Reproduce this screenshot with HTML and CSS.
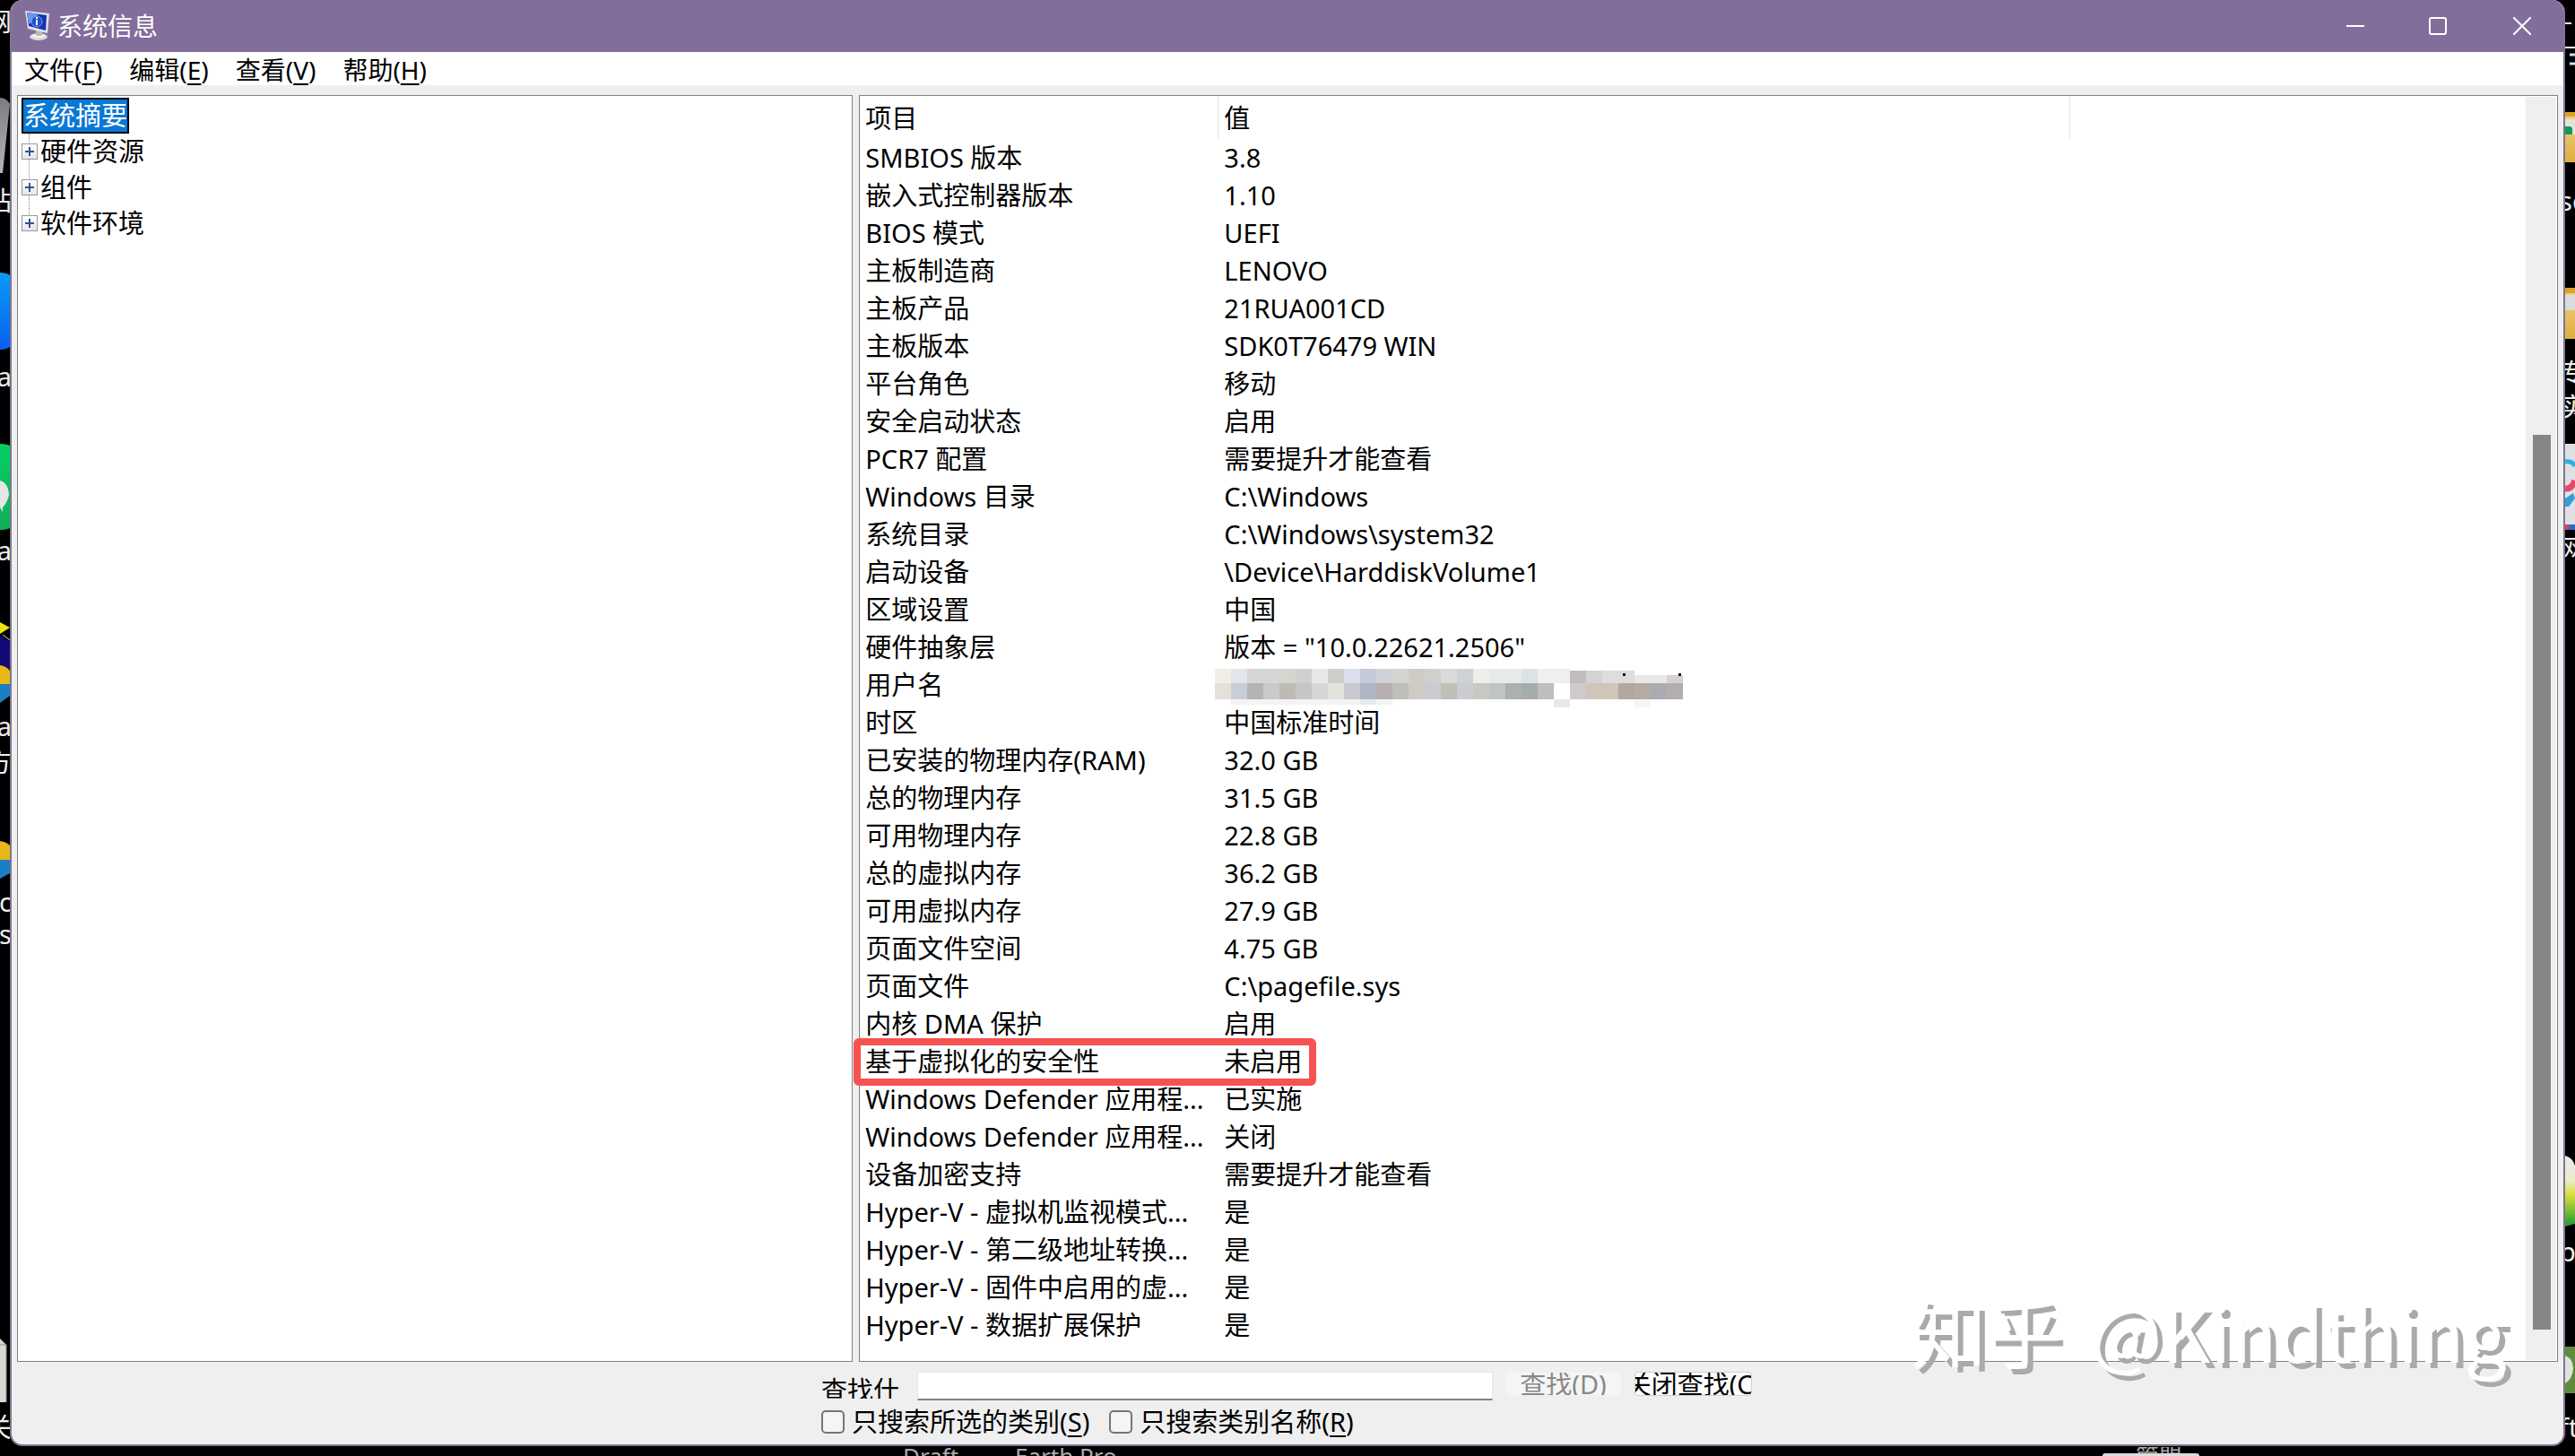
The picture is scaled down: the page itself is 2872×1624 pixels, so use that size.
FILE: index.html
```html
<!DOCTYPE html>
<html lang="zh-CN">
<head>
<meta charset="utf-8">
<title>系统信息</title>
<link rel="stylesheet" href="styles.css">
</head>
<body>
<div class="desktop">
  <div class="edge edge-left" aria-hidden="true">
    <svg width="11" height="1624" viewBox="0 0 11 1624">
      <defs>
        <linearGradient id="blue" x1="0" y1="0" x2="0" y2="1"><stop offset="0" stop-color="#0a9bf5"/><stop offset="1" stop-color="#0a5ff0"/></linearGradient>
        <linearGradient id="green" x1="0" y1="0" x2="0" y2="1"><stop offset="0" stop-color="#06cf62"/><stop offset="1" stop-color="#10ad58"/></linearGradient>
        <linearGradient id="bin" x1="0" y1="0" x2="0" y2="1"><stop offset="0" stop-color="#7c7c7c"/><stop offset="1" stop-color="#b5b5b5"/></linearGradient>
      </defs>
      <path d="M0 109Q7 109 11 116L3 193H0z" fill="url(#bin)"/>
      <path d="M0 304Q7 304 11 307V387Q7 390 0 390z" fill="url(#blue)"/>
      <path d="M0 495Q7 495 11 497V589Q7 591 0 591z" fill="url(#green)"/>
      <path d="M0 536Q9 538 10 552Q8 561 3 566V571L0 566z" fill="#e6e6e6"/>
      <path d="M0 694L11 700L0 707z" fill="#e9e312"/>
      <path d="M0 709L11 716V746L0 744z" fill="#130a78"/>
      <path d="M3 708L11 714" stroke="#ddd"/>
      <path d="M0 742Q7 743 11 748V763H0z" fill="#e7b818"/>
      <path d="M0 763H11V776L0 784z" fill="#1c7fc4"/>
      <path d="M0 938Q7 939 11 943V959H0z" fill="#e7b818"/>
      <path d="M0 959H11V974L0 980z" fill="#1c7fc4"/>
      <path d="M0 1493L7 1500V1564H0z" fill="#d6d8d6"/>
      <path d="M0 1500H7V1564" fill="none" stroke="#8a8d86"/>
    </svg>
    <span class="frag" style="top:4px">网</span>
    <span class="frag" style="top:204px">站</span>
    <span class="frag" style="top:400px">a</span>
    <span class="frag" style="top:594px">a</span>
    <span class="frag" style="top:790px">ra</span>
    <span class="frag" style="top:830px">方</span>
    <span class="frag" style="top:986px">yc</span>
    <span class="frag" style="top:1022px">s</span>
    <span class="frag" style="top:1572px">关</span>
  </div>
  <div class="edge edge-right" aria-hidden="true">
    <svg width="11" height="1624" viewBox="0 0 11 1624">
      <defs>
        <linearGradient id="folder" x1="0" y1="0" x2="0" y2="1"><stop offset="0" stop-color="#f0d68a"/><stop offset="1" stop-color="#dfae3e"/></linearGradient>
        <linearGradient id="ball" x1="0" y1="0" x2="0" y2="1"><stop offset="0" stop-color="#ececec"/><stop offset=".35" stop-color="#e8ecc8"/><stop offset=".55" stop-color="#d8e038"/><stop offset="1" stop-color="#1f9a35"/></linearGradient>
      </defs>
      <path d="M0 26H7M0 53H11" stroke="#eee" stroke-width="2"/>
      <path d="M5 61H11M5 71H11" stroke="#bfe4f5" stroke-width="3"/>
      <path d="M0 125H11V181H0z" fill="url(#folder)"/><path d="M0 125H11V130H0z" fill="#d9a32c"/>
      <path d="M0 133H11V150H0z" fill="#e4e4d8"/><path d="M0 141H6L8 143V150H0z" fill="#0d9c5e"/>
      <path d="M0 321H11V378H0z" fill="url(#folder)"/><path d="M0 321H11V327H0z" fill="#d9a32c"/>
      <path d="M0 329H11V346H0z" fill="#dcdcdc"/>
      <path d="M0 495H11V585H0z" fill="#dfe0e4"/>
      <path d="M0 515Q8 514 11 520" fill="none" stroke="#28b4e4" stroke-width="5"/>
      <path d="M0 545Q7 546 11 536" fill="none" stroke="#e8486a" stroke-width="7"/>
      <path d="M0 556L9 550L11 556L4 565H0z" fill="#2f9fd8"/>
      <path d="M0 585H4V591H0z" fill="#e23c5c"/><path d="M4 585H11V591H4z" fill="#2a6cc0"/>
      <path d="M0 1289Q8 1291 11 1300V1365L0 1368z" fill="url(#ball)"/>
      <path d="M0 1502H11V1554H0z" fill="#5f8c3c"/>
      <path d="M0 1512Q9 1515 9 1527Q8 1538 0 1543z" fill="#dde4dc"/>
    </svg>
    <span class="frag" style="top:204px">sc</span>
    <span class="frag" style="top:396px">专</span>
    <span class="frag" style="top:434px">实</span>
    <span class="frag" style="top:592px">网</span>
    <span class="frag" style="top:1376px">p</span>
    <span class="frag" style="top:1572px">ft</span>
  </div>
  <div class="edge edge-bottom" aria-hidden="true">
    <span class="under" style="left:1007px">Draft</span>
    <span class="under" style="left:1132px">Earth Pro</span>
    <span class="under" style="left:2382px">管盟</span>
    <span class="tip"></span>
  </div>

  <div class="window">
    <header class="titlebar">
      <svg class="app-icon" width="30" height="34" viewBox="0 0 30 34" aria-hidden="true">
        <ellipse cx="16" cy="29" rx="10" ry="4" fill="#d9d9d6"/>
        <ellipse cx="16" cy="28" rx="7" ry="2" fill="#f5f5f3"/>
        <path d="M13 22h7v6h-7z" fill="#b9b9b5"/>
        <path d="M1 0L28 3L26 25L4 20z" fill="#dfe2ea"/>
        <path d="M3 2L25 5L24 22L5 17z" fill="#1532b4"/>
        <path d="M3 2L15 4Q12 12 5 15z" fill="#6f94e8"/>
        <circle cx="14" cy="12" r="6" fill="#2450c4" stroke="#7fa2ee"/>
        <path d="M14 10v6M14 7v2" stroke="#fff" stroke-width="2"/>
      </svg>
      <h1 class="title">系统信息</h1>
      <div class="controls">
        <button type="button" aria-label="最小化"><svg width="20" height="20" viewBox="0 0 20 20"><path d="M0 10H20"/></svg></button>
        <button type="button" aria-label="最大化"><svg width="20" height="20" viewBox="0 0 20 20"><rect x="1" y="1" width="18" height="18" rx="2"/></svg></button>
        <button type="button" aria-label="关闭"><svg width="20" height="20" viewBox="0 0 20 20"><path d="M0 0L20 20M20 0L0 20"/></svg></button>
      </div>
    </header>

    <nav class="menu">
      <button type="button">文件(<u>F</u>)</button>
      <button type="button">编辑(<u>E</u>)</button>
      <button type="button">查看(<u>V</u>)</button>
      <button type="button">帮助(<u>H</u>)</button>
    </nav>

    <main class="panes">
      <section class="pane tree">
        <span class="root">系统摘要</span>
        <ul class="branches">
          <li><button type="button" class="expander" aria-label="展开"></button>硬件资源</li>
          <li><button type="button" class="expander" aria-label="展开"></button>组件</li>
          <li><button type="button" class="expander" aria-label="展开"></button>软件环境</li>
        </ul>
      </section>

      <section class="pane details">
        <table>
          <colgroup><col class="col-item"><col class="col-value"><col></colgroup>
          <thead><tr><th>项目</th><th>值</th><th></th></tr></thead>
          <tbody>
            <tr><td>SMBIOS 版本</td><td>3.8</td></tr>
            <tr><td>嵌入式控制器版本</td><td>1.10</td></tr>
            <tr><td>BIOS 模式</td><td>UEFI</td></tr>
            <tr><td>主板制造商</td><td>LENOVO</td></tr>
            <tr><td>主板产品</td><td>21RUA001CD</td></tr>
            <tr><td>主板版本</td><td>SDK0T76479 WIN</td></tr>
            <tr><td>平台角色</td><td>移动</td></tr>
            <tr><td>安全启动状态</td><td>启用</td></tr>
            <tr><td>PCR7 配置</td><td>需要提升才能查看</td></tr>
            <tr><td>Windows 目录</td><td>C:\Windows</td></tr>
            <tr><td>系统目录</td><td>C:\Windows\system32</td></tr>
            <tr><td>启动设备</td><td>\Device\HarddiskVolume1</td></tr>
            <tr><td>区域设置</td><td>中国</td></tr>
            <tr><td>硬件抽象层</td><td>版本 = "10.0.22621.2506"</td></tr>
            <tr><td>用户名</td><td class="masked"><svg class="mosaic" width="522" height="44" viewBox="0 0 522 44" shape-rendering="crispEdges" aria-hidden="true">
              <g stroke-width="16">
                <path d="M0 9h18" stroke="#f0eee6"/><path d="M18 9h18" stroke="#e2e6ec"/><path d="M36 9h36" stroke="#d6d6d6"/><path d="M72 9h18" stroke="#d6d6d0"/><path d="M90 9h18" stroke="#d0d0d0"/><path d="M108 9h18" stroke="#e8e8e8"/><path d="M126 9h18" stroke="#cfcfca"/><path d="M144 9h18" stroke="#dce0ec"/><path d="M162 9h18" stroke="#c4cad6"/><path d="M180 9h18" stroke="#d0d2d8"/><path d="M198 9h18" stroke="#d5d5d0"/><path d="M216 9h18" stroke="#ceccc5"/><path d="M234 9h18" stroke="#d0d0cc"/><path d="M252 9h18" stroke="#dadada"/><path d="M270 9h18" stroke="#ced1d6"/><path d="M288 9h18" stroke="#eeede7"/><path d="M306 9h36" stroke="#e8eaea"/><path d="M342 9h18" stroke="#dce2e8"/><path d="M360 9h36" stroke="#efefef"/><path d="M396 11h18" stroke="#bfbdbf"/><path d="M414 11h18" stroke="#d4d2d4"/><path d="M432 11h36" stroke="#dedcdc"/>
              </g>
              <path d="M468 13h36" stroke="#e8e8ea" stroke-width="10"/><path d="M504 13h18" stroke="#d8d0d0" stroke-width="10"/>
              <g stroke-width="18">
                <path d="M0 26h18" stroke="#e5e1d8"/><path d="M18 26h18" stroke="#c8ced8"/><path d="M36 26h18" stroke="#b4b4b4"/><path d="M54 26h18" stroke="#c9cbca"/><path d="M72 26h18" stroke="#bdbbb4"/><path d="M90 26h18" stroke="#c6c6c6"/><path d="M108 26h18" stroke="#d6d6d6"/><path d="M126 26h18" stroke="#e2e3db"/><path d="M144 26h18" stroke="#cac9d1"/><path d="M162 26h18" stroke="#b0b6c6"/><path d="M180 26h18" stroke="#b7afb0"/><path d="M198 26h18" stroke="#bebebb"/><path d="M216 26h18" stroke="#cdcbc4"/><path d="M234 26h18" stroke="#cacbd0"/><path d="M252 26h18" stroke="#c0bfb7"/><path d="M270 26h18" stroke="#cacccf"/><path d="M288 26h18" stroke="#c8c9c5"/><path d="M306 26h18" stroke="#c0c4c4"/><path d="M324 26h18" stroke="#adb0b0"/><path d="M342 26h18" stroke="#a4adab"/><path d="M360 26h18" stroke="#bebebe"/><path d="M396 26h18" stroke="#cdc9cc"/><path d="M414 26h36" stroke="#cdc6b9"/><path d="M450 26h18" stroke="#b1a7a3"/><path d="M468 26h18" stroke="#b6aaa3"/><path d="M486 26h18" stroke="#aaaab0"/><path d="M504 26h18" stroke="#b3adb0"/>
              </g>
              <path d="M18 38h144M180 38h18" stroke="#f4f4f4" stroke-width="6"/><path d="M162 38h18" stroke="#e9eaee" stroke-width="6"/><path d="M378 40h18" stroke="#e8e8e8" stroke-width="10"/><path d="M468 41h18" stroke="#f6f6f6" stroke-width="12"/>
              <path d="M455 7h3M517 7h3" stroke="#111" stroke-width="3"/>
            </svg></td></tr>
            <tr><td>时区</td><td>中国标准时间</td></tr>
            <tr><td>已安装的物理内存(RAM)</td><td>32.0 GB</td></tr>
            <tr><td>总的物理内存</td><td>31.5 GB</td></tr>
            <tr><td>可用物理内存</td><td>22.8 GB</td></tr>
            <tr><td>总的虚拟内存</td><td>36.2 GB</td></tr>
            <tr><td>可用虚拟内存</td><td>27.9 GB</td></tr>
            <tr><td>页面文件空间</td><td>4.75 GB</td></tr>
            <tr><td>页面文件</td><td>C:\pagefile.sys</td></tr>
            <tr><td>内核 DMA 保护</td><td>启用</td></tr>
            <tr><td class="marked">基于虚拟化的安全性<span class="marker"></span></td><td>未启用</td></tr>
            <tr><td>Windows Defender 应用程...</td><td>已实施</td></tr>
            <tr><td>Windows Defender 应用程...</td><td>关闭</td></tr>
            <tr><td>设备加密支持</td><td>需要提升才能查看</td></tr>
            <tr><td>Hyper-V - 虚拟机监视模式...</td><td>是</td></tr>
            <tr><td>Hyper-V - 第二级地址转换...</td><td>是</td></tr>
            <tr><td>Hyper-V - 固件中启用的虚...</td><td>是</td></tr>
            <tr><td>Hyper-V - 数据扩展保护</td><td>是</td></tr>
          </tbody>
        </table>
        <div class="scrollbar"><div class="thumb"></div></div>
      </section>
    </main>

    <form class="find">
      <div class="find-row">
        <label class="find-label" for="query">查找什</label>
        <input class="query" id="query" type="text">
        <button type="button" class="push" disabled><span>查找(D)</span></button>
        <button type="button" class="push push-close"><span>关闭查找(C)</span></button>
      </div>
      <div class="check-row">
        <label><input type="checkbox"><span>只搜索所选的类别(<u>S</u>)</span></label>
        <label><input type="checkbox"><span>只搜索类别名称(<u>R</u>)</span></label>
      </div>
    </form>
  </div>
  <div class="watermark"><span>知乎</span><span>@Kindthing</span></div>
</div>
</body>
</html>
```
FILE: styles.css
```css
* { box-sizing: border-box; }

body {
  margin: 0;
  background: #000;
  color: #000;
  font: 29px/42px "Noto Sans", "Noto Sans CJK SC", sans-serif;
}

button, input { font: inherit; color: inherit; }

u { text-underline-offset: 4px; text-decoration-thickness: 2px; text-decoration-skip-ink: none; }

.desktop {
  position: relative;
  display: flex;
  min-height: 100vh;
  padding: 0 11px 11px;
  overflow: hidden;
}

/* Desktop icons that show round the window */
.edge { position: absolute; overflow: hidden; color: #eee; }
.edge-left { left: 0; top: 0; width: 11px; height: 100%; }
.edge-right { right: 0; top: 0; width: 11px; height: 100%; }
.edge-bottom { left: 0; bottom: 0; width: 100%; height: 10px; color: #aaa; }
.edge svg { display: block; }
.frag { position: absolute; line-height: 40px; white-space: nowrap; }
.edge-left .frag { right: -2px; }
.edge-right .frag { left: -6px; }
.under { position: absolute; top: -5px; font-size: 26px; line-height: 30px; white-space: nowrap; }
.tip { position: absolute; left: 2345px; bottom: 0; width: 108px; height: 3px; border-radius: 3px 3px 0 0; background: #ddd; }

.window {
  position: relative;
  flex: 1;
  display: flex;
  flex-direction: column;
  min-width: 0;
  border: 2px solid #7f7593;
  border-top: 0;
  border-radius: 14px;
  background: #efefef;
  overflow: hidden;
}

.titlebar {
  display: flex;
  align-items: center;
  height: 58px;
  margin: 0 -2px;
  padding-left: 16px;
  background: #836e9b;
  color: #fff;
}
.title { margin: 0 0 0 7px; font-size: 28px; font-weight: 400; }
.controls { display: flex; margin-left: auto; }
.controls button {
  display: grid;
  place-items: center;
  width: 92px;
  height: 58px;
  padding: 0;
  border: 0;
  background: none;
}
.controls button:last-child { width: 96px; }
.controls svg { fill: none; stroke: #fff; stroke-width: 2; }

.menu {
  display: flex;
  gap: 30px;
  height: 37px;
  padding-left: 14px;
  background: #fff;
}
.menu button { padding: 0; border: 0; background: none; font-size: 28px; line-height: 40px; }

.panes {
  flex: 1;
  display: grid;
  grid-template-columns: minmax(0, 932fr) minmax(0, 1894fr);
  gap: 7px;
  padding: 11px 6px 0 6px;
}
.pane { border: 1px solid #828282; background: #fff; }

.tree { padding: 2px 4px; line-height: 40px; }
.root {
  display: inline-block;
  height: 40px;
  border: 2px solid #000;
  background: #0a78d4;
  color: #fff;
  line-height: 36px;
  vertical-align: top;
}
.branches { margin: 0; padding: 0; list-style: none; position: relative; }
.branches::before {
  content: "";
  position: absolute;
  left: 8px;
  top: 0;
  height: 100px;
  border-left: 1px dotted #888;
}
.branches li { display: flex; align-items: center; gap: 3px; height: 40px; }
.expander {
  position: relative;
  width: 18px;
  height: 18px;
  padding: 0;
  border: 1px solid #999;
  background:
    linear-gradient(#3a4f96, #3a4f96) center / 10px 2px no-repeat,
    linear-gradient(#3a4f96, #3a4f96) center / 2px 10px no-repeat,
    linear-gradient(#fff, #e6e6e6);
}

.details { display: flex; justify-content: space-between; }
table { flex: 1; table-layout: fixed; border-collapse: separate; border-spacing: 0; width: 100%; align-self: flex-start; }
.col-item { width: 400px; }
.col-value { width: 950px; }
th, td { height: 42px; padding: 0 0 0 6px; text-align: left; white-space: nowrap; font-weight: 400; }
th { height: 48px; padding-top: 2px; border-right: 1px solid #e2e2e2; }
th:last-child { border: 0; }
.masked, .marked { position: relative; }
.mosaic { position: absolute; left: -4px; top: 2px; }
.marker {
  position: absolute;
  left: -7px;
  top: -5px;
  width: 516px;
  height: 53px;
  border: 8px solid #f65252;
  border-radius: 6px;
}

.scrollbar { flex: 0 0 34px; margin: 1px 1px 1px 0; padding: 377px 6px 34px 8px; background: #efefef; display: flex; }
.thumb { flex: 1; background: #858585; }

.find { padding: 11px 0 12px; }
.find-row { display: flex; width: 1040px; margin: 0 auto; }
.find-label { width: 87px; height: 30px; margin-right: 20px; line-height: 42px; overflow: hidden; }
.query { width: 642px; height: 32px; margin-right: 13px; padding: 0 8px; border: 1px solid #e6e6e6; border-bottom: 2px solid #858585; background: #fff; }
.push {
  display: flex;
  justify-content: center;
  width: 131px;
  height: 27px;
  padding: 0;
  border: 1px solid #d0d0d0;
  border-radius: 4px;
  background: #fdfdfd;
  line-height: 26px;
  white-space: nowrap;
  overflow: hidden;
}
.push span { flex: none; }
.push:disabled { border-color: #f0f0f0; background: #f5f5f5; color: #888; }
.push-close { margin-left: 14px; }
.check-row { display: flex; gap: 22px; width: 1040px; margin: 11px auto 0; height: 26px; }
.check-row label { display: flex; align-items: center; gap: 8px; white-space: nowrap; }
.check-row input {
  appearance: none;
  width: 26px;
  height: 26px;
  margin: 0;
  border: 2px solid #757575;
  border-radius: 5px;
  background: #f5f5f5;
}

.watermark {
  position: absolute;
  right: 76px;
  bottom: 80px;
  display: flex;
  gap: 32px;
  color: #fff;
  font: 400 84px/120px "Noto Sans CJK SC", sans-serif;
  text-shadow: 6px 6px 0 #aaa;
  white-space: nowrap;
}
```
